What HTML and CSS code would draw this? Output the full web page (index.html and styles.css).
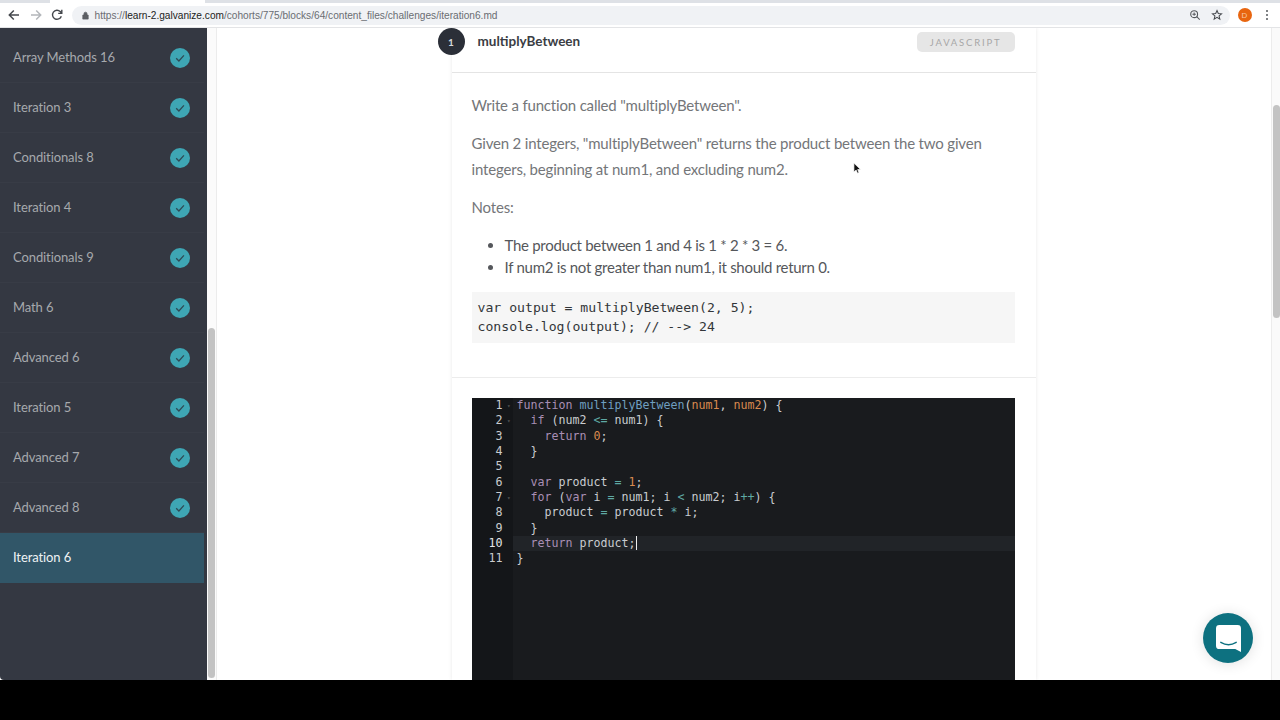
FILE: index.html
```html
<!DOCTYPE html>
<html lang="en">
<head>
<meta charset="utf-8">
<title>Iteration 6</title>
<link rel="stylesheet" href="styles.css">
</head>
<body>
<div class="screen">
  <header class="chrome">
    <div class="tabstrip"><div class="tab-left"></div><div class="tab-active"></div><div class="tab-rest"></div></div>
    <div class="toolbar">
      <svg class="nav" viewBox="0 0 14 14"><path d="M12 7H2.5M6.8 2.5 2.3 7l4.5 4.5" fill="none" stroke="#45484d" stroke-width="1.5"/></svg>
      <svg class="nav" viewBox="0 0 14 14"><path d="M2 7h9.500M7.200 2.500 11.700 7l-4.500 4.500" fill="none" stroke="#b4b7bb" stroke-width="1.500"/></svg>
      <svg class="nav" viewBox="0 0 14 14"><path d="M11.300 8.200A4.500 4.500 0 1 1 10.200 3.600L11.800 5.200M11.800 1.800v3.600H8.200" fill="none" stroke="#45484d" stroke-width="1.400"/></svg>
      <div class="omnibox">
        <svg class="lock" viewBox="0 0 10 10"><path d="M2 4.500h6v4.500H2zM3.300 4.500V3a1.700 1.700 0 0 1 3.400 0v1.500" fill="#5c5f64" stroke="#5c5f64" stroke-width=".8" fill-opacity="1"/></svg>
        <span class="url"><span class="url-dim">https://</span><span class="url-host">learn-2.galvanize.com</span><span class="url-dim">/cohorts/775/blocks/64/content_files/challenges/iteration6.md</span></span>
        <svg class="omni-icon" viewBox="0 0 14 14"><circle cx="6" cy="6" r="4" fill="none" stroke="#55585c" stroke-width="1.300"/><path d="M9 9l3.500 3.500M4 6h4M6 4v4" stroke="#55585c" stroke-width="1.200"/></svg>
        <svg class="omni-icon" viewBox="0 0 14 14"><path d="M7 1.800 8.500 5.300l3.800.3-2.900 2.500.9 3.700L7 9.800l-3.300 2 .9-3.700L1.700 5.600l3.800-.3z" fill="none" stroke="#45484d" stroke-width="1.200"/></svg>
      </div>
      <div class="avatar">D</div>
      <div class="menu-dots"><i></i><i></i><i></i></div>
    </div>
  </header>
  <div class="workspace">
    <aside class="sidebar">
      <nav class="lessons">
        <a class="lesson">Array Methods 16<span class="tick"><svg viewBox="0 0 20 20"><path d="M6.200 10.300 8.900 13l5-5.600" fill="none" stroke="#2f4a55" stroke-width="1.300"/></svg></span></a>
        <a class="lesson">Iteration 3<span class="tick"><svg viewBox="0 0 20 20"><path d="M6.200 10.300 8.900 13l5-5.600" fill="none" stroke="#2f4a55" stroke-width="1.300"/></svg></span></a>
        <a class="lesson">Conditionals 8<span class="tick"><svg viewBox="0 0 20 20"><path d="M6.200 10.300 8.900 13l5-5.600" fill="none" stroke="#2f4a55" stroke-width="1.300"/></svg></span></a>
        <a class="lesson">Iteration 4<span class="tick"><svg viewBox="0 0 20 20"><path d="M6.200 10.300 8.900 13l5-5.600" fill="none" stroke="#2f4a55" stroke-width="1.300"/></svg></span></a>
        <a class="lesson">Conditionals 9<span class="tick"><svg viewBox="0 0 20 20"><path d="M6.200 10.300 8.900 13l5-5.600" fill="none" stroke="#2f4a55" stroke-width="1.300"/></svg></span></a>
        <a class="lesson">Math 6<span class="tick"><svg viewBox="0 0 20 20"><path d="M6.200 10.300 8.900 13l5-5.600" fill="none" stroke="#2f4a55" stroke-width="1.300"/></svg></span></a>
        <a class="lesson">Advanced 6<span class="tick"><svg viewBox="0 0 20 20"><path d="M6.200 10.300 8.900 13l5-5.600" fill="none" stroke="#2f4a55" stroke-width="1.300"/></svg></span></a>
        <a class="lesson">Iteration 5<span class="tick"><svg viewBox="0 0 20 20"><path d="M6.200 10.300 8.900 13l5-5.600" fill="none" stroke="#2f4a55" stroke-width="1.300"/></svg></span></a>
        <a class="lesson">Advanced 7<span class="tick"><svg viewBox="0 0 20 20"><path d="M6.200 10.300 8.900 13l5-5.600" fill="none" stroke="#2f4a55" stroke-width="1.300"/></svg></span></a>
        <a class="lesson">Advanced 8<span class="tick"><svg viewBox="0 0 20 20"><path d="M6.200 10.300 8.900 13l5-5.600" fill="none" stroke="#2f4a55" stroke-width="1.300"/></svg></span></a>
        <a class="lesson active">Iteration 6</a>
      </nav>
      <div class="side-scroll"><div class="side-thumb"></div></div>
    </aside>
    <main class="main">
      <article class="card">
        <div class="card-head">
          <span class="step">1</span>
          <h1 class="title">multiplyBetween</h1>
          <span class="badge">JAVASCRIPT</span>
        </div>
        <section class="prose">
          <p>Write a function called "multiplyBetween".</p>
          <p>Given 2 integers, "multiplyBetween" returns the product between the two given integers, beginning at num1, and excluding num2.</p>
          <p>Notes:</p>
          <ul>
            <li>The product between 1 and 4 is 1 * 2 * 3 = 6.</li>
            <li>If num2 is not greater than num1, it should return 0.</li>
          </ul>
          <pre class="sample">var output = multiplyBetween(2, 5);
console.log(output); // --&gt; 24</pre>
        </section>
        <section class="editor-wrap">
          <div class="editor">
            <div class="gutter"><div>1<b>▾</b></div><div>2<b>▾</b></div><div>3</div><div>4</div><div>5</div><div>6</div><div>7<b>▾</b></div><div>8</div><div>9</div><div class="cur">10</div><div>11</div></div>
            <pre class="code"><span class="ln"><span class="k">function</span> <span class="f">multiplyBetween</span>(<span class="a">num1</span>, <span class="a">num2</span>) {</span><span class="ln">  <span class="k">if</span> (num2 <span class="o">&lt;=</span> num1) {</span><span class="ln">    <span class="k">return</span> <span class="a">0</span>;</span><span class="ln">  }</span><span class="ln"> </span><span class="ln">  <span class="k">var</span> product <span class="o">=</span> <span class="a">1</span>;</span><span class="ln">  <span class="k">for</span> (<span class="k">var</span> i <span class="o">=</span> num1; i <span class="o">&lt;</span> num2; i<span class="o">++</span>) {</span><span class="ln">    product <span class="o">=</span> product <span class="o">*</span> i;</span><span class="ln">  }</span><span class="ln hl">  <span class="k">return</span> product;<span class="caret"></span></span><span class="ln">}</span></pre>
          </div>
        </section>
      </article>
      <div class="page-scroll"><div class="page-thumb"></div></div>
      <svg class="pointer" viewBox="0 0 10 14"><path d="M1 1v10l2.500-2.200L5 12.300l1.700-.8-1.500-3.300h3.300z" fill="#111" stroke="#fff" stroke-width=".8"/></svg>
      <div class="chat">
        <svg viewBox="0 0 26 28"><path d="M3.500 0h19A3.500 3.500 0 0 1 26 3.500V28l-6-3H3.500A3.500 3.500 0 0 1 0 21.500v-18A3.500 3.500 0 0 1 3.500 0z" fill="#fff"/><path d="M5 18c5 3 11 3 16 0" fill="none" stroke="#0d7180" stroke-width="1.500" stroke-linecap="round"/></svg>
      </div>
    </main>
  </div>
  <div class="letterbox"></div>
</div>
</body>
</html>
```
FILE: styles.css
```css
* { box-sizing: border-box; }
html, body { margin: 0; height: 100%; background: #000; overflow: hidden; }
body { font-family: Lato, "Open Sans", sans-serif; }
.screen { width: 1280px; height: 720px; display: flex; flex-direction: column; overflow: hidden; }

.chrome { height: 28px; flex: none; background: #fff; border-bottom: 1px solid #e3e4e6; display: flex; flex-direction: column; }
.tabstrip { height: 3px; display: flex; flex: none; }
.tab-left { width: 50px; background: #dee1e6; }
.tab-active { width: 155px; background: #fff; }
.tab-rest { flex: 1; background: #dee1e6; }
.toolbar { flex: 1; display: flex; align-items: center; padding-left: 7px; }
.nav { width: 14px; height: 14px; margin-right: 7.500px; flex: none; }
.omnibox { width: 1158px; height: 19px; margin-left: 0; border-radius: 10px; background: #f0f2f5; display: flex; align-items: center; padding: 0 7px 0 9px; }
.lock { width: 9px; height: 9px; flex: none; margin-right: 5px; }
.url { flex: 1; font: 10.150px "Liberation Sans", Arial, sans-serif; white-space: nowrap; }
.url-dim { color: #6a6d72; }
.url-host { color: #222; }
.omni-icon { width: 12px; height: 12px; margin-left: 10px; flex: none; }
.avatar { width: 14px; height: 14px; border-radius: 50%; background: #e8650f; color: #f6c9a5; font: 8px "Liberation Sans", sans-serif; display: flex; align-items: center; justify-content: center; margin-left: 8px; flex: none; }
.menu-dots { display: flex; flex-direction: column; gap: 2px; margin-left: 14px; }
.menu-dots i { width: 2px; height: 2px; background: #55585c; border-radius: 50%; display: block; }

.workspace { height: 652px; flex: none; display: flex; background: #fff; position: relative; }
.sidebar { width: 217px; flex: none; display: flex; height: 100%; }
.lessons { width: 207px; flex: none; background: #343842; padding-top: 5px; display: flex; flex-direction: column; border-bottom-left-radius: 4px; }
.lesson { height: 50px; flex: none; display: flex; align-items: center; justify-content: space-between; padding: 0 14px 2px 13px; margin-right: 3px; font-size: 13px; letter-spacing: -.1px; color: #a6a9ad; border-bottom: 1px solid #383c46; }
.lesson .tick { margin-top: 2px; }
.lesson.active { background: #315668; color: #eef2f4; border-bottom: 0; }
.tick { width: 20px; height: 20px; border-radius: 50%; background: #3ea6b4; display: block; flex: none; }
.tick svg { width: 20px; height: 20px; display: block; }
.side-scroll { width: 10px; flex: none; background: #fbfbfb; border-right: 1px solid #ececec; padding: 300px 2px 2px 1px; }
.side-thumb { width: 7px; height: 350px; border-radius: 4px; background: #c3c3c3; }

.main { flex: 1; min-width: 0; position: relative; overflow: hidden; display: flex; justify-content: center; padding-right: 9px; padding-left: 171px; }
.card { width: 584px; flex: none; height: 100%; margin-right: 172px; box-shadow: 0 0 4px rgba(0,0,0,.09); position: relative; background: #fff; }
.card-head { height: 45px; border-bottom: 1px solid #e4e4e4; display: flex; align-items: flex-start; padding: 4px 21px 0 26px; }
.step { position: absolute; left: -14px; top: 0; width: 27px; height: 27px; border-radius: 50%; background: #2b2f38; color: #d8dade; font-size: 10px; font-weight: 700; display: flex; align-items: center; justify-content: center; }
.title { margin: 0; flex: 1; font-size: 13.500px; line-height: 18px; font-weight: 700; color: #3a3d44; }
.badge { width: 98px; height: 20px; border-radius: 5px; background: #e6e6e6; color: #a6a6a6; font-size: 9.500px; letter-spacing: 1.800px; display: flex; align-items: center; justify-content: center; }
.prose { padding: 19px 21px 34px 20px; border-bottom: 1px solid #ececec; font-size: 15px; letter-spacing: -.18px; color: #747679; line-height: 26px; height: 305px; }
.prose p { margin: 0 0 12px; }
.prose ul { margin: 14px 0 14px; padding: 0 0 0 33px; line-height: 22px; letter-spacing: -.28px; color: #55575b; }
.sample { margin: 0; height: 51px; background: #f6f6f6; padding: 6px 6px; font: 13.150px/19px "DejaVu Sans Mono", monospace; letter-spacing: 0; color: #33363a; }
.editor-wrap { padding: 20px 21px 0 20px; }
.editor { height: 300px; background: #191b1e; display: flex; }
.gutter { width: 41px; flex: none; background: #141619; padding-top: 0; font: 400 11.700px/15.350px "DejaVu Sans Mono", monospace; color: #c9cbcd; text-align: right; }
.gutter div { padding-right: 10px; position: relative; }
.gutter b { position: absolute; right: 2px; top: 0; font-size: 6px; color: #555; font-weight: 400; }
.gutter .cur { color: #e4e6e8; }
.code { margin: 0; flex: 1; padding: 0; font: 11.630px/15.350px "DejaVu Sans Mono", monospace; color: #c9ccd0; }
.ln { display: block; height: 15.350px; padding-left: 4px; }
.hl { background: #212428; }
.k { color: #a98fb5; }
.f { color: #6f9fc0; }
.a { color: #d98a4f; }
.o { color: #5fa9a4; }
.caret { display: inline-block; width: 1.500px; height: 14px; background: #eee; vertical-align: -3px; }

.page-scroll { position: absolute; right: 0; top: 0; bottom: 0; width: 9px; background: #fafafa; border-left: 1px solid #ececec; }
.page-thumb { position: absolute; left: 1px; top: 77px; width: 7px; height: 213px; border-radius: 4px; background: #c3c3c3; }
.pointer { position: absolute; left: 636px; top: 134px; width: 9px; height: 13px; }
.chat { position: absolute; left: 986px; top: 585px; width: 50px; height: 50px; border-radius: 50%; background: #0d7180; display: flex; align-items: center; justify-content: center; box-shadow: 0 1px 14px rgba(0,0,0,.12); }
.chat svg { width: 25px; height: 27px; margin-top: 1px; }

.letterbox { flex: 1; background: #000; }
```
